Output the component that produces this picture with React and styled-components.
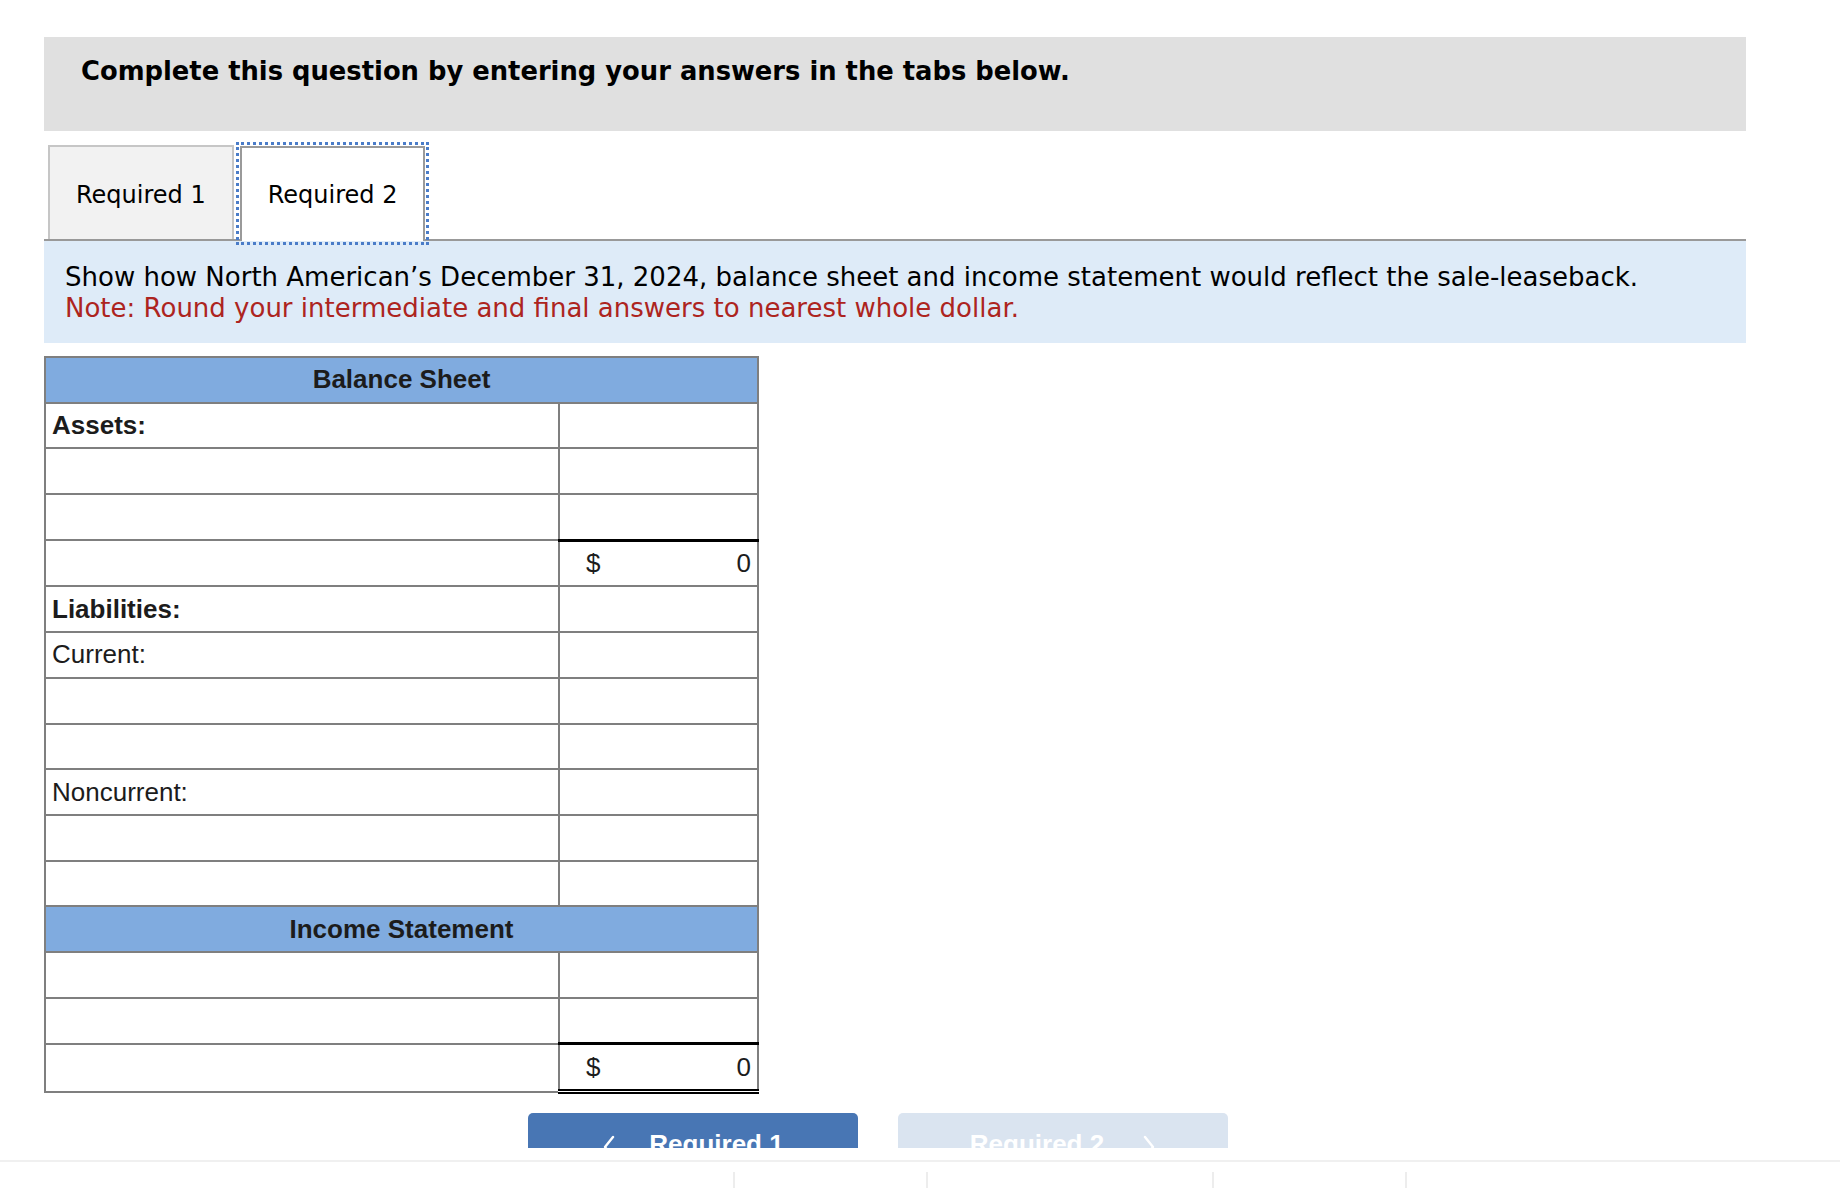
import React from "react";
import styled, { createGlobalStyle } from "styled-components";

const GlobalStyle = createGlobalStyle`
  html, body {
    margin: 0;
    padding: 0;
    background: #ffffff;
  }
  body {
    font-family: "DejaVu Sans", Verdana, sans-serif;
    color: #000;
  }
`;

const Page = styled.div`
  width: 1840px;
  height: 1188px;
  overflow: hidden;
`;

const Viewport = styled.div`
  height: 1148px;
  overflow: hidden;
`;

const Content = styled.div`
  width: 1702px;
  padding: 37px 0 0 44px;
`;

const Banner = styled.div`
  box-sizing: border-box;
  height: 94px;
  padding: 19px 0 0 37px;
  background: #e0e0e0;
  font: 700 25.8px/30px "DejaVu Sans", Verdana, sans-serif;
`;

const TabList = styled.div`
  display: flex;
  align-items: flex-end;
  margin-top: 14px;
  padding-left: 4px;
  position: relative;
  z-index: 1;
`;

const Tab = styled.button`
  box-sizing: border-box;
  height: ${({ $active }) => ($active ? "95px" : "94px")};
  margin: 0 0 ${({ $active }) => ($active ? "-2px" : "0")}
    ${({ $active }) => ($active ? "6px" : "0")};
  padding: ${({ $active }) => ($active ? "0 26px" : "3px 26px 0")};
  border: 2px solid ${({ $active }) => ($active ? "#9a9a9a" : "#c6c6c6")};
  border-bottom: none;
  background: ${({ $active }) => ($active ? "#ffffff" : "#f2f2f2")};
  color: #000;
  font: 400 24px/30px "DejaVu Sans", Verdana, sans-serif;
  outline: ${({ $active }) => ($active ? "3px dotted #4a7cc8" : "none")};
  outline-offset: 1px;
  cursor: pointer;
`;

const Instructions = styled.div`
  box-sizing: border-box;
  border-top: 2px solid #999999;
  background: #deebf8;
  padding: 21px 20px 19px 21px;
  font: 400 26px/31px "DejaVu Sans", Verdana, sans-serif;
`;

const Note = styled.div`
  color: #ad2420;
`;

const Sheet = styled.table`
  margin-top: 13px;
  width: 715px;
  border-collapse: collapse;
  border: 2px solid #7f7f7f;
  font: 400 26px "Liberation Sans", Arial, sans-serif;
  color: #1c1c1c;
`;

const HeadCell = styled.th`
  height: 43.7px;
  padding: 0;
  background: #80abdf;
  border: 2px solid #7f7f7f;
  font-weight: 700;
  text-align: center;
  vertical-align: middle;
`;

const LabelCell = styled.td`
  width: 500px;
  height: 43.7px;
  padding: 0 6px;
  border: 2px solid #7f7f7f;
  font-weight: ${({ $bold }) => ($bold ? 700 : 400)};
  vertical-align: middle;
  white-space: nowrap;
`;

const AmountCell = styled.td`
  height: 43.7px;
  padding: 0 6px 0 26px;
  border: 2px solid #7f7f7f;
  border-top: ${({ $total }) => ($total ? "3px solid #000" : "2px solid #7f7f7f")};
  border-bottom: ${({ $final }) =>
    $final ? "5px double #000" : "2px solid #7f7f7f"};
  vertical-align: middle;
`;

const Amount = styled.div`
  display: flex;
  justify-content: space-between;
`;

const NavRow = styled.div`
  display: flex;
  gap: 40px;
  margin-top: 19px;
  padding-left: 484px;
`;

const NavButton = styled.button`
  box-sizing: border-box;
  width: 330px;
  height: 60px;
  display: flex;
  align-items: flex-start;
  justify-content: center;
  gap: ${({ $next }) => ($next ? "38px" : "33px")};
  padding: 16px 0 0;
  border: none;
  border-radius: 5px;
  background: ${({ disabled }) => (disabled ? "#dae4f0" : "#4876b4")};
  color: #ffffff;
  font: 700 26px/30px "Liberation Sans", Arial, sans-serif;
  cursor: ${({ disabled }) => (disabled ? "default" : "pointer")};

  svg {
    margin-top: 6px;
    flex: none;
  }
`;

const Footer = styled.div`
  display: flex;
  margin-top: 12px;
  padding-top: 10px;
  border-top: 2px solid #f0f0f0;
  height: 26px;
`;

const FooterCell = styled.div`
  width: ${({ $w }) => $w}px;
  height: 100%;
  border-left: ${({ $first }) => ($first ? "none" : "2px solid #ededed")};
  box-sizing: border-box;
`;

const Chevron = ({ dir }) => (
  <svg width="14" height="24" viewBox="0 0 14 24" fill="none">
    <path
      d={dir === "left" ? "M11 2 L3 12 L11 22" : "M3 2 L11 12 L3 22"}
      stroke="#ffffff"
      strokeWidth="2.4"
      strokeLinecap="round"
      strokeLinejoin="round"
    />
  </svg>
);

const rows = [
  { head: "Balance Sheet" },
  { label: "Assets:", bold: true },
  {},
  {},
  { total: true, value: "0" },
  { label: "Liabilities:", bold: true },
  { label: "Current:" },
  {},
  {},
  { label: "Noncurrent:" },
  {},
  {},
  { head: "Income Statement" },
  {},
  {},
  { total: true, final: true, value: "0" },
];

const App = () => {
  return (
    <Page>
      <GlobalStyle />
      <Viewport>
        <Content>
          <Banner>Complete this question by entering your answers in the tabs below.</Banner>

          <TabList>
            <Tab>Required 1</Tab>
            <Tab $active>Required 2</Tab>
          </TabList>

          <Instructions>
            <div>
              Show how North American’s December 31, 2024, balance sheet and income
              statement would reflect the sale-leaseback.
            </div>
            <Note>Note: Round your intermediate and final answers to nearest whole dollar.</Note>
          </Instructions>

          <Sheet>
            <tbody>
              {rows.map((row, i) =>
                row.head ? (
                  <tr key={i}>
                    <HeadCell colSpan={2}>{row.head}</HeadCell>
                  </tr>
                ) : (
                  <tr key={i}>
                    <LabelCell $bold={row.bold}>{row.label}</LabelCell>
                    <AmountCell $total={row.total} $final={row.final}>
                      {row.total && (
                        <Amount>
                          <span>$</span>
                          <span>{row.value}</span>
                        </Amount>
                      )}
                    </AmountCell>
                  </tr>
                )
              )}
            </tbody>
          </Sheet>

          <NavRow>
            <NavButton>
              <Chevron dir="left" />
              Required 1
            </NavButton>
            <NavButton $next disabled>
              Required 2
              <Chevron dir="right" />
            </NavButton>
          </NavRow>
        </Content>
      </Viewport>

      <Footer>
        <FooterCell $first $w={733} />
        <FooterCell $w={193} />
        <FooterCell $w={286} />
        <FooterCell $w={193} />
        <FooterCell $w={435} />
      </Footer>
    </Page>
  );
};

export default App;
